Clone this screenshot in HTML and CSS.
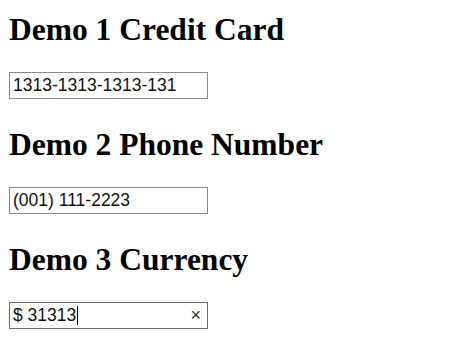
FILE: index.html
```html
<!DOCTYPE html>
<html lang="en">
<head>
<meta charset="UTF-8" />
<title>Input Mask Demos</title>
<link rel="stylesheet" href="styles.css">
</head>
<body>

<div class="demo">
    <h2>Demo 1 Credit Card</h2>
    <input type="text" class="masked" value="1313-1313-1313-131">
</div>

<div class="demo">
    <h2>Demo 2 Phone Number</h2>
    <input type="text" class="masked" value="(001) 111-2223">
</div>

<!-- focused currency field, with caret and clear button -->
<div class="demo">
    <h2>Demo 3 Currency</h2>
    <div class="masked field">
        <span class="value">$ 31313</span><span class="caret"></span>
        <span class="clear">&times;</span>
    </div>
</div>

</body>
</html>
```

FILE: styles.css
```css
body {
    margin: 0;
    padding: 13px 0 0 9px;
    background: #fff;
    color: #000;
}
.demo {
    margin-bottom: 29px;
}
.demo:last-child {
    margin-bottom: 0;
}
h2 {
    font-family: 'Liberation Serif', 'Times New Roman', serif;
    font-size: 31.5px;
    font-weight: 700;
    line-height: 34px;
    margin: 0 0 25px 0;
}
.masked {
    display: block;
    width: 199px;
    height: 27px;
    box-sizing: border-box;
    border: 1px solid #8a8a8a;
    padding: 0 3px;
    margin: 0;
    font-family: 'Liberation Sans', Arial, sans-serif;
    font-size: 17.5px;
    color: #111;
    outline: none;
}
.field {
    display: flex;
    align-items: center;
    border-color: #6f6f6f;
}
.caret {
    width: 1px;
    height: 19px;
    margin-left: 1px;
    background: #000;
}
.clear {
    margin-left: auto;
    margin-right: 3px;
    font-size: 18px;
    color: #333;
}
```
